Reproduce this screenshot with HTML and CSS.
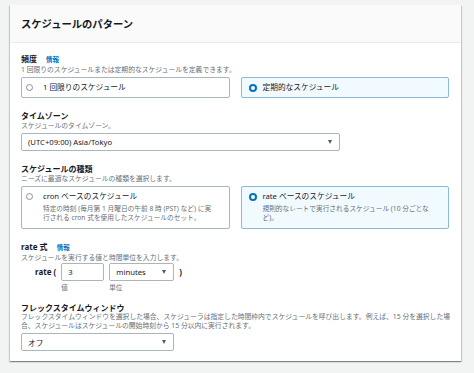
FILE: index.html
```html
<!DOCTYPE html>
<html lang="ja">
<head>
    <meta charset="UTF-8">
    <meta name="viewport" content="width=device-width, initial-scale=1.0">
    <title>スケジュールのパターン</title>
    <link rel="stylesheet" href="styles.css">
</head>
<body>
    <div class="panel">
        <div class="panel-header">
            <h2 class="panel-title">スケジュールのパターン</h2>
        </div>
        <div class="panel-body">

            <!-- 頻度 -->
            <div class="field">
                <div class="field-label">頻度 <a class="info-link">情報</a></div>
                <div class="field-desc">1 回限りのスケジュールまたは定期的なスケジュールを定義できます。</div>
                <div class="tiles">
                    <div class="tile">
                        <span class="radio"></span>
                        <div class="tile-label">1 回限りのスケジュール</div>
                    </div>
                    <div class="tile selected">
                        <span class="radio"></span>
                        <div class="tile-label">定期的なスケジュール</div>
                    </div>
                </div>
            </div>

            <!-- タイムゾーン -->
            <div class="field">
                <div class="field-label">タイムゾーン</div>
                <div class="field-desc">スケジュールのタイムゾーン。</div>
                <div class="select timezone">
                    <span>(UTC+09:00) Asia/Tokyo</span>
                    <span class="caret"></span>
                </div>
            </div>

            <!-- スケジュールの種類 -->
            <div class="field">
                <div class="field-label">スケジュールの種類</div>
                <div class="field-desc">ニーズに最適なスケジュールの種類を選択します。</div>
                <div class="tiles">
                    <div class="tile">
                        <span class="radio"></span>
                        <div>
                            <div class="tile-label">cron ベースのスケジュール</div>
                            <div class="tile-desc">特定の時刻 (毎月第 1 月曜日の午前 8 時 (PST) など) に実行される cron 式を使用したスケジュールのセット。</div>
                        </div>
                    </div>
                    <div class="tile selected">
                        <span class="radio"></span>
                        <div>
                            <div class="tile-label">rate ベースのスケジュール</div>
                            <div class="tile-desc">規則的なレートで実行されるスケジュール (10 分ごとなど)。</div>
                        </div>
                    </div>
                </div>
            </div>

            <!-- rate 式 -->
            <div class="field">
                <div class="field-label">rate 式 <a class="info-link">情報</a></div>
                <div class="field-desc">スケジュールを実行する値と時間単位を入力します。</div>
                <div class="rate-row">
                    <span class="rate-word">rate (</span>
                    <div class="rate-control">
                        <div class="text-input">3</div>
                        <div class="control-hint">値</div>
                    </div>
                    <div class="rate-control">
                        <div class="select unit">
                            <span>minutes</span>
                            <span class="caret"></span>
                        </div>
                        <div class="control-hint">単位</div>
                    </div>
                    <span class="rate-word">)</span>
                </div>
            </div>

            <!-- フレックスタイムウィンドウ -->
            <div class="field flex-field">
                <div class="field-label">フレックスタイムウィンドウ</div>
                <div class="field-desc">フレックスタイムウィンドウを選択した場合、スケジューラは指定した時間枠内でスケジュールを呼び出します。例えば、15 分を選択した場合、スケジュールはスケジュールの開始時刻から 15 分以内に実行されます。</div>
                <div class="select flex-window">
                    <span>オフ</span>
                    <span class="caret"></span>
                </div>
            </div>

        </div>
    </div>
</body>
</html>
```

FILE: styles.css
```css
body {
    margin: 0;
    padding: 5px 13px 8px 10px;
    background-color: #f2f3f3;
    font-family: "Noto Sans", "Noto Sans CJK JP", sans-serif;
    color: #16191f;
}
.panel {
    background-color: #fff;
    box-shadow: 0 1px 1px rgba(0, 28, 36, 0.3), 1px 1px 1px rgba(0, 28, 36, 0.15), -1px 1px 1px rgba(0, 28, 36, 0.15);
}
.panel-header {
    display: flex;
    align-items: center;
    height: 36px;
    padding: 1px 11px 0;
    background-color: #fafafa;
    border-bottom: 1px solid #eaeded;
}
.panel-title {
    margin: 0;
    font-size: 10.3px;
    font-weight: 700;
    line-height: 12px;
}
.panel-body {
    padding: 10px 12px 10px 11px;
}
.field + .field {
    margin-top: 12px;
}
.field.flex-field {
    margin-top: 10px;
}
.field-label {
    font-size: 8px;
    font-weight: 700;
    line-height: 11px;
}
.info-link {
    margin-left: 7px;
    font-size: 6.5px;
    color: #0073bb;
}
.field-desc {
    font-size: 6.8px;
    line-height: 9px;
    color: #687078;
}
.flex-field .field-desc {
    margin-right: -3px;
    line-height: 8.5px;
}
.tiles {
    display: grid;
    grid-template-columns: 1fr 1fr;
    gap: 11px;
    margin-top: 3px;
}
.tile {
    display: flex;
    align-items: flex-start;
    padding: 4px 16px 4px 4px;
    border: 1px solid #aab7b8;
    border-radius: 2px;
}
.tile.selected {
    padding-left: 7px;
    background-color: #f1faff;
    border-color: #8db9d9;
}
.radio {
    flex: none;
    box-sizing: border-box;
    width: 7px;
    height: 7px;
    margin: 2px 10px 0 0;
    border: 1px solid #879596;
    border-radius: 50%;
    background-color: #fff;
}
.tile.selected .radio {
    width: 8px;
    height: 8px;
    margin: 1.5px 6px 0 0;
    border: 2.5px solid #0073bb;
}
.tile-label {
    font-size: 7.7px;
    line-height: 11px;
}
.tile-desc {
    margin: 2px 0 2px;
    font-size: 6.7px;
    line-height: 9px;
    color: #687078;
}
.select {
    display: flex;
    align-items: center;
    justify-content: space-between;
    box-sizing: border-box;
    height: 18px;
    padding: 0 7px 0 6px;
    border: 1px solid #aab7b8;
    border-radius: 2px;
    font-size: 7.7px;
}
.timezone {
    width: 319px;
    margin-top: 3px;
}
.flex-window {
    width: 153px;
    margin-top: 3px;
}
.caret {
    width: 0;
    height: 0;
    border-left: 2.5px solid transparent;
    border-right: 2.5px solid transparent;
    border-top: 4px solid #545b64;
}
.rate-row {
    display: flex;
    align-items: flex-start;
    gap: 5px;
    margin-top: 1px;
    padding-left: 14px;
}
.rate-word {
    font-size: 8px;
    font-weight: 700;
    line-height: 18px;
}
.text-input {
    box-sizing: border-box;
    width: 43px;
    height: 18px;
    padding: 0 6px;
    border: 1px solid #aab7b8;
    border-radius: 2px;
    font-size: 7.7px;
    line-height: 16px;
}
.unit {
    width: 65px;
}
.control-hint {
    margin-top: 3px;
    font-size: 6.5px;
    line-height: 8px;
    color: #687078;
}
```
